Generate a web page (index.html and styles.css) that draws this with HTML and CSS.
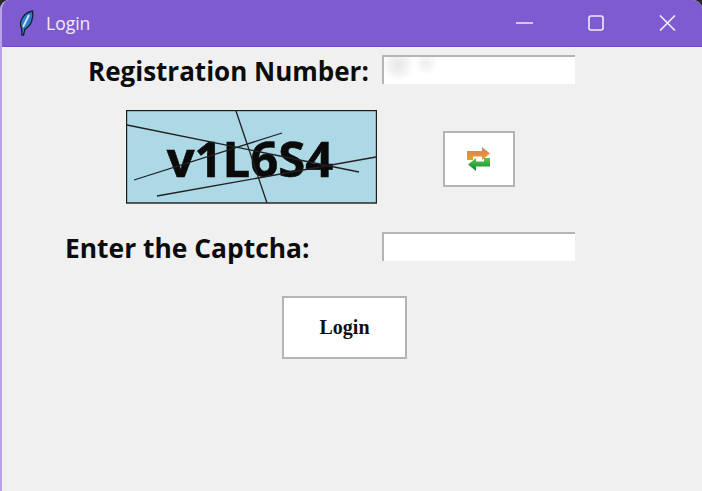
FILE: index.html
```html
<!DOCTYPE html>
<html lang="en">
<head>
  <meta charset="UTF-8" />
  <title>Login</title>
  <link rel="stylesheet" href="styles.css">
</head>
<body>
  <div class="window">
    <div class="titlebar">
      <svg class="app-icon" width="18" height="26" viewBox="0 0 18 26">
        <path d="M5 25 L4.5 18 C1.5 12 6 3 15.5 1 C17 8 14 16 8 19 L6.5 25 Z" fill="#2f7fc4" stroke="#14202c" stroke-width="1.3"/>
        <path d="M6 17 L12 5" stroke="#cfe6f6" stroke-width="1.8" fill="none"/>
      </svg>
      <span class="window-title">Login</span>
      <div class="window-controls">
        <svg width="17" height="16" viewBox="0 0 17 16"><path d="M0 8 H17" stroke="#f1ecfb" stroke-width="1.6"/></svg>
        <svg width="16" height="16" viewBox="0 0 16 16"><rect x="1" y="1" width="14" height="14" rx="2" fill="none" stroke="#f1ecfb" stroke-width="1.6"/></svg>
        <svg width="17" height="16" viewBox="0 0 17 16"><path d="M1 0.5 L16 15.5 M16 0.5 L1 15.5" stroke="#f1ecfb" stroke-width="1.6"/></svg>
      </div>
    </div>

    <div class="content">
      <div class="row row-reg">
        <label class="field-label label-reg">Registration Number:</label>
        <div class="entry entry-smudged"></div>
      </div>

      <div class="row row-captcha">
        <svg class="captcha" width="251" height="94" viewBox="0 0 251 94">
          <rect x="0.5" y="0.5" width="250" height="92.5" fill="#add8e6" stroke="#1c1c1c" stroke-width="1.4"/>
          <text x="124" y="67" text-anchor="middle" class="captcha-text">v1L6S4</text>
          <g stroke="#222" stroke-width="1.3">
            <path d="M1 15 L233 62"/>
            <path d="M8 70 L156 23"/>
            <path d="M31 86 L250 47"/>
            <path d="M110 1 L141 93"/>
          </g>
        </svg>
        <button class="btn btn-refresh" type="button">
          <svg width="26" height="26" viewBox="0 0 26 26">
            <defs>
              <linearGradient id="orange" x1="0" y1="0" x2="0" y2="1">
                <stop offset="0" stop-color="#c9826e"/>
                <stop offset="1" stop-color="#f59a1e"/>
              </linearGradient>
              <linearGradient id="green" x1="0" y1="0" x2="0" y2="1">
                <stop offset="0" stop-color="#57cc4f"/>
                <stop offset="1" stop-color="#0a8524"/>
              </linearGradient>
            </defs>
            <path d="M1 14 V5 H16 V1 L24 7.5 L16 14 V10.5 H7 V14 Z" fill="url(#orange)"/>
            <path d="M24 12 V20.5 H10 V25 L2 18.5 L10 12 V15.5 H18 V12 Z" fill="url(#green)"/>
          </svg>
        </button>
      </div>

      <div class="row row-code">
        <label class="field-label label-code">Enter the Captcha:</label>
        <div class="entry"></div>
      </div>

      <div class="row row-submit">
        <button class="btn btn-login" type="button">Login</button>
      </div>
    </div>
  </div>
</body>
</html>
```

FILE: styles.css
```css
* { box-sizing: border-box; }

html, body {
  margin: 0;
  height: 100%;
  background: #2a2a2a;
  overflow: hidden;
}

.window {
  height: 491px;
  display: flex;
  flex-direction: column;
  background: #f0f0f0;
  border-radius: 9px 9px 0 0;
  border-left: 2px solid #b9a3ea;
  overflow: hidden;
}

.titlebar {
  height: 47px;
  margin-left: -2px;
  display: flex;
  align-items: center;
  padding: 0 26px 0 17px;
  background: #7f5bd2;
  border-bottom: 1px solid #6f4cc6;
  font-family: "Open Sans", sans-serif;
  color: #f1ecfb;
}

.window-title {
  margin-left: 11px;
  font-size: 17.5px;
}

.window-controls {
  margin-left: auto;
  display: flex;
  gap: 55px;
}

.content {
  display: flex;
  flex-direction: column;
  padding-top: 7px;
}

.row {
  display: flex;
  align-items: center;
}

.field-label {
  font-family: "Open Sans", sans-serif;
  font-weight: 700;
  font-size: 26px;
  color: #0c0c0c;
  white-space: nowrap;
}

.row-reg { height: 30px; padding-left: 86px; }
.label-reg { width: 294px; padding-top: 4px; }

.row-captcha { margin-top: 26px; height: 94px; padding-left: 124px; }
.row-code { margin-top: 27px; height: 30px; padding-left: 63px; }
.label-code { width: 317px; padding-top: 4px; font-size: 26.4px; }
.row-submit { margin-top: 35px; padding-left: 280px; }

.entry {
  width: 193px;
  height: 29px;
  background: #fff;
  border-top: 2px solid #b4b4b4;
  border-left: 2px solid #b4b4b4;
}

.entry-smudged {
  background:
    radial-gradient(circle at 14px 8px, #e6e6e6 0, #f4f4f4 10px, transparent 16px),
    radial-gradient(circle at 42px 6px, #ededed 0, transparent 12px),
    #fff;
}

.captcha-text {
  font-family: "Open Sans", sans-serif;
  font-weight: 700;
  font-size: 49px;
  fill: #0a0a0a;
  stroke: #0a0a0a;
  stroke-width: 0.6;
}

.captcha {
  flex: none;
}

.btn {
  display: flex;
  align-items: center;
  justify-content: center;
  padding: 0;
  background: #fff;
  border: 2px solid #b4b4b4;
}

.btn-refresh {
  width: 72px;
  height: 56px;
  margin-left: 66px;
  align-self: flex-start;
  margin-top: 21px;
}

.btn-login {
  width: 125px;
  height: 63px;
  font-family: "Liberation Serif", serif;
  font-weight: 700;
  font-size: 20px;
  color: #111;
}
```
